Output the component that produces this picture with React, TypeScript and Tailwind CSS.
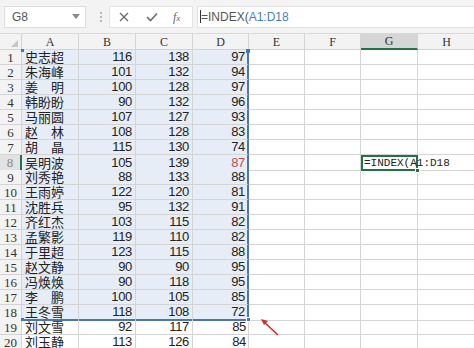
import { Fragment } from "react"

const rows: [string, number, number, number][] = [
	["史志超", 116, 138, 97],
	["朱海峰", 101, 132, 94],
	["姜　明", 100, 128, 97],
	["韩盼盼", 90, 132, 96],
	["马丽圆", 107, 127, 93],
	["赵　林", 108, 128, 83],
	["胡　晶", 115, 130, 74],
	["吴明波", 105, 139, 87],
	["刘秀艳", 88, 133, 88],
	["王雨婷", 122, 120, 81],
	["沈胜兵", 95, 132, 91],
	["齐红杰", 103, 115, 82],
	["孟繁影", 119, 110, 82],
	["于里超", 123, 115, 88],
	["赵文静", 90, 90, 95],
	["冯焕焕", 90, 118, 95],
	["李　鹏", 100, 105, 85],
	["王冬雪", 118, 108, 72],
	["刘文雪", 92, 117, 85],
	["刘玉静", 113, 126, 84],
]

const cols = ["A", "B", "C", "D", "E", "F", "G", "H"]

const serif = "font-['Liberation_Serif','Noto_Sans_CJK_SC',serif]"
const sans = "font-['Liberation_Sans','Noto_Sans_CJK_SC',sans-serif]"
const cjk = "font-['Noto_Sans_CJK_SC',sans-serif]"
const grid = "grid grid-cols-[22px_57px_57px_57px_56px_56px_56px_57px_58px]"

function FormulaBar() {
	return (
		<div className="flex h-[34px] items-center bg-[#f3f3f3] border-b border-[#d8d8d8]">
			{/* name box */}
			<div className="ml-[4px] flex h-[22px] w-[82px] items-center justify-between border border-[#dcdcdc] bg-white pl-[7px] pr-[5px]">
				<span className={`${sans} text-[12px] text-[#555]`}>G8</span>
				<svg width="8" height="5" viewBox="0 0 8 5">
					<path d="M0 0 L8 0 L4 5 Z" fill="#8a8a8a" />
				</svg>
			</div>
			<div className="ml-[8px] flex w-[13px] flex-col items-center gap-[2px]">
				<span className="h-[2px] w-[2px] bg-[#b8b8b8]" />
				<span className="h-[2px] w-[2px] bg-[#b8b8b8]" />
				<span className="h-[2px] w-[2px] bg-[#b8b8b8]" />
			</div>
			{/* cancel / enter / fx */}
			<div className="ml-[2px] flex h-[22px] w-[84px] items-center bg-white border border-[#e2e2e2]">
				<svg className="ml-[9px]" width="10" height="10" viewBox="0 0 10 10">
					<path d="M1 1 L9 9 M9 1 L1 9" stroke="#6b6b6b" strokeWidth="1.3" />
				</svg>
				<svg className="ml-[17px]" width="12" height="10" viewBox="0 0 12 10">
					<path d="M1 5 L4.5 8.5 L11 1.5" stroke="#6b6b6b" strokeWidth="1.6" fill="none" />
				</svg>
				<span className={`ml-[15px] ${serif} italic text-[12px] text-[#666]`}>
					f<span className="text-[9px]">x</span>
				</span>
			</div>
			{/* formula input */}
			<div className="ml-[4px] flex h-[22px] flex-1 items-center bg-white border-y border-l border-[#e2e2e2] pl-[2px]">
				<span className="h-[13px] w-px bg-[#333]" />
				<span className={`${sans} text-[12px] text-[#555]`}>=INDEX(</span>
				<span className={`${sans} text-[12px] text-[#4a7fc0]`}>A1:D18</span>
			</div>
		</div>
	)
}

function HeaderRow() {
	return (
		<div className={`${grid} h-[16px]`}>
			<div className="relative border-r border-b border-[#d4d4d4] bg-[#f3f3f3]">
				<svg className="absolute right-[3px] bottom-[2px]" width="7" height="7" viewBox="0 0 7 7">
					<path d="M7 0 L7 7 L0 7 Z" fill="#c6c6c6" />
				</svg>
			</div>
			{cols.map((c) => (
				<div
					key={c}
					className={`flex items-center justify-center border-r border-[#d4d4d4] ${serif} text-[12px] leading-none ${
						c === "G" ? "bg-[#d6d6d6] border-b-2 border-b-[#217346] text-[#333]" : "bg-[#f3f3f3] border-b text-[#333]"
					}`}
				>
					{c}
				</div>
			))}
		</div>
	)
}

export default function App() {
	return (
		<div className="relative h-[348px] w-[474px] overflow-hidden bg-white">
			<FormulaBar />
			<HeaderRow />
			{rows.map(([name, b, c, d], i) => {
				const n = i + 1
				const sel = n <= 18
				const last = n === 18
				const active = n === 8
				const selBg = sel ? "bg-[#e6edf7]" : ""
				const bottom = last ? "border-b-2 border-b-[#4a74b4]" : "border-b border-b-[#d4d4d4]"
				const num = `flex items-center justify-end pr-[3px] border-r border-r-[#d4d4d4] ${selBg} ${bottom} ${sans} text-[13px] leading-[14px] tracking-[-0.3px] text-[#222]`
				return (
					<div key={n} className={`${grid} h-[15px]`}>
						<div
							className={`flex items-center justify-center border-b border-[#d4d4d4] ${serif} text-[13px] leading-none ${
								active ? "bg-[#e2e2e2] border-r-2 border-r-[#217346] text-[#888]" : "bg-[#f3f3f3] border-r text-[#333]"
							}`}
						>
							{n}
						</div>
						<div className={`flex items-center overflow-hidden pl-[3px] border-r border-r-[#d4d4d4] ${selBg} ${bottom} ${cjk} text-[13px] leading-[14px] text-[#222]`}>
							{name}
						</div>
						<div className={num}>{b}</div>
						<div className={num}>{c}</div>
						<div
							className={`flex items-center justify-end pr-[2px] ${selBg} ${bottom} ${sans} text-[13px] leading-[14px] tracking-[-0.3px] ${
								sel ? "border-r-2 border-r-[#4a74b4]" : "border-r border-r-[#d4d4d4]"
							} ${active ? "text-[#c0504d]" : "text-[#222]"}`}
						>
							{d}
						</div>
						{["E", "F", "G", "H"].map((col) => (
							<Fragment key={col}>
								{active && col === "G" ? (
									<div className="relative z-10 flex items-center whitespace-nowrap border-2 border-[#217346] pl-[1px]">
										<span className="font-['Liberation_Mono',monospace] text-[11px] leading-[12px] text-[#222]">=INDEX(A1:D18</span>
										<span className="absolute right-[-4px] bottom-[-4px] h-[5px] w-[5px] bg-[#217346] border border-white" />
									</div>
								) : (
									<div className="border-r border-b border-[#d4d4d4]" />
								)}
							</Fragment>
						))}
					</div>
				)
			})}

			{/* range handles */}
			<span className="absolute left-[21px] top-[49px] h-[3px] w-[3px] bg-[#4a74b4]" />
			<span className="absolute left-[246px] top-[49px] h-[4px] w-[4px] bg-[#4a74b4]" />
			<span className="absolute left-[21px] top-[318px] h-[3px] w-[3px] bg-[#4a74b4]" />
			<span className="absolute left-[246px] top-[317px] h-[5px] w-[5px] bg-[#4a74b4] border border-white" />

			{/* red arrow */}
			<svg className="absolute left-[258px] top-[316px]" width="24" height="22" viewBox="0 0 24 22">
				<path d="M20 19 L5 5" stroke="#d42b2b" strokeWidth="1.6" />
				<path d="M3 3 L10 5 L6 9 Z" fill="#d42b2b" />
			</svg>
		</div>
	)
}
